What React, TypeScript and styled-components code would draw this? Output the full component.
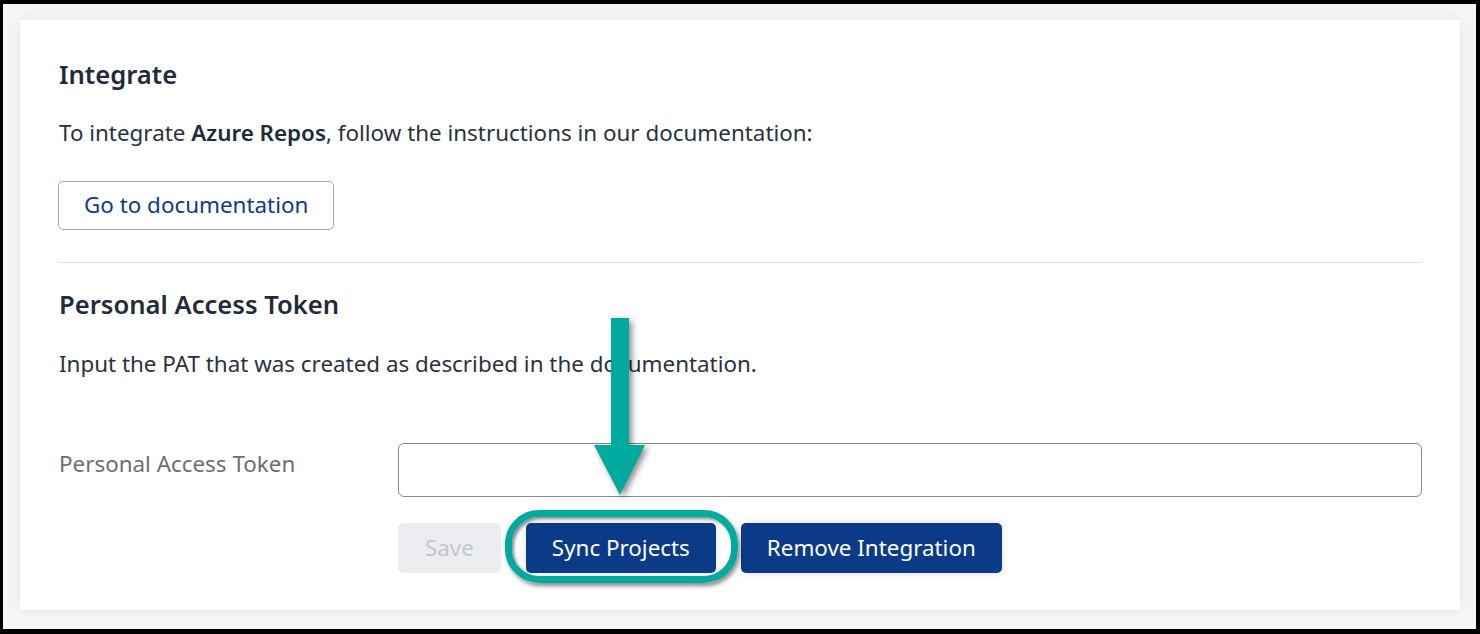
import React from 'react';
import styled, { createGlobalStyle } from 'styled-components';

const GlobalStyle = createGlobalStyle`
  html, body {
    margin: 0;
    padding: 0;
    background: #000;
  }
  * {
    box-sizing: border-box;
  }
`;

const Frame = styled.div`
  height: 634px;
  border-style: solid;
  border-color: #000;
  border-width: 4px 4px 5px 3px;
  background: #f6f6f6;
  padding: 16px 16px 19px 17px;
  font-family: 'Noto Sans', 'Open Sans', sans-serif;
`;

const Card = styled.div`
  height: 590px;
  background: #fff;
  box-shadow: 0 0 14px rgba(0, 0, 0, 0.07);
  padding: 40px 38px 0 38px;
`;

const Heading = styled.h2<{ $top?: number }>`
  margin: ${(p) => p.$top ?? 0}px 0 0 1px;
  font-size: 25.6px;
  line-height: 29px;
  font-weight: 600;
  color: #212b3a;
`;

const Text = styled.p<{ $top: number }>`
  margin: ${(p) => p.$top}px 0 0 1px;
  font-size: 22.4px;
  line-height: 30px;
  color: #2a3240;

  strong {
    font-weight: 600;
    color: #212b3a;
  }
`;

const OutlineButton = styled.button`
  margin-top: 33px;
  height: 49px;
  padding: 0 25px 2px;
  border: 1px solid #9aaacb;
  border-radius: 5px;
  background: #fff;
  color: #0d3a89;
  font-family: inherit;
  font-size: 22.4px;
  cursor: pointer;
`;

const Divider = styled.hr`
  margin: 32px 0 0 0;
  border: none;
  border-top: 1px solid #e1e1e1;
`;

const FormRow = styled.div`
  margin-top: 64px;
  display: grid;
  grid-template-columns: 340px 1fr;
`;

const Label = styled.label`
  padding: 6px 0 0 1px;
  font-size: 22.4px;
  line-height: 30px;
  color: #6e6e6e;
`;

const Input = styled.input`
  height: 54px;
  width: 100%;
  border: 1px solid #8a8a8a;
  border-radius: 6px;
  background: #fff;
  font-family: inherit;
  font-size: 22.4px;
  padding: 0 14px;
`;

const Actions = styled.div`
  grid-column: 2;
  margin-top: 26px;
  display: flex;
  gap: 25px;
`;

const ActionButton = styled.button<{ $disabled?: boolean }>`
  height: 50px;
  padding: 0 ${(p) => (p.$disabled ? 27 : 26)}px 2px;
  border: none;
  border-radius: 5px;
  font-family: inherit;
  font-size: 22.4px;
  background: ${(p) => (p.$disabled ? '#ebedf0' : '#0b3a89')};
  color: ${(p) => (p.$disabled ? '#c3c7cc' : '#ffffff')};
  box-shadow: ${(p) => (p.$disabled ? 'none' : '0 0 10px rgba(0, 0, 0, 0.12)')};
  cursor: ${(p) => (p.$disabled ? 'default' : 'pointer')};
`;

const Highlighted = styled.div`
  position: relative;
`;

const Ring = styled.div`
  position: absolute;
  top: -13px;
  bottom: -10px;
  left: -21px;
  right: -22px;
  border: 7px solid #00aa9f;
  border-radius: 34px;
  box-shadow: 2px 3px 4px rgba(0, 0, 0, 0.45), inset 2px 2px 3px rgba(0, 0, 0, 0.45);
  pointer-events: none;
`;

const Arrow = styled.svg`
  position: absolute;
  top: -205px;
  left: 68px;
  width: 51px;
  height: 177px;
  overflow: visible;
  filter: drop-shadow(3px 3px 3px rgba(0, 0, 0, 0.45));
  pointer-events: none;
`;

export default function App() {
  return (
    <>
      <GlobalStyle />
      <Frame>
        <Card>
          <Heading>Integrate</Heading>
          <Text $top={29}>
            To integrate <strong>Azure Repos</strong>, follow the instructions in our documentation:
          </Text>
          <OutlineButton>Go to documentation</OutlineButton>
          <Divider />
          <Heading $top={27}>Personal Access Token</Heading>
          <Text $top={30}>Input the PAT that was created as described in the documentation.</Text>
          <FormRow>
            <Label htmlFor="pat">Personal Access Token</Label>
            <Input id="pat" type="text" />
            <Actions>
              <ActionButton $disabled disabled>
                Save
              </ActionButton>
              <Highlighted>
                <ActionButton>Sync Projects</ActionButton>
                <Ring />
                <Arrow viewBox="0 0 51 177">
                  <path d="M17 0 H35 V127 H51 L26 177 L0 127 H17 Z" fill="#00aa9f" />
                </Arrow>
              </Highlighted>
              <ActionButton>Remove Integration</ActionButton>
            </Actions>
          </FormRow>
        </Card>
      </Frame>
    </>
  );
}
